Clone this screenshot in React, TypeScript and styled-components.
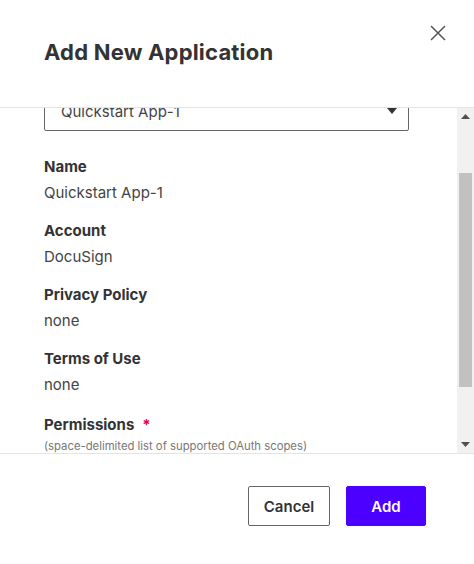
import React, { useEffect, useRef } from 'react';
import styled, { createGlobalStyle } from 'styled-components';

const GlobalStyle = createGlobalStyle`
  html, body {
    margin: 0;
    padding: 0;
    background: #ffffff;
  }
  body {
    font-family: Inter, "Noto Sans", "Liberation Sans", sans-serif;
    color: #333333;
  }
`;

const Modal = styled.div`
  width: 474px;
  height: 564px;
  display: flex;
  flex-direction: column;
  background: #fff;
`;

const Header = styled.header`
  flex: none;
  height: 108px;
  box-sizing: border-box;
  display: flex;
  align-items: flex-start;
  justify-content: space-between;
  padding: 25px 28px 0 44px;
  border-bottom: 1px solid #e4e4e4;
`;

const Title = styled.h2`
  margin: 13px 0 0;
  font-size: 22px;
  line-height: 28px;
  font-weight: 700;
  color: #333;
  letter-spacing: 0.2px;
`;

const CloseButton = styled.button`
  width: 16px;
  height: 16px;
  padding: 0;
  border: 0;
  background: none;
  cursor: pointer;
  display: flex;
`;

const Body = styled.div`
  flex: 1;
  min-height: 0;
  display: flex;
`;

// the scrolled list of fields
const ScrollArea = styled.div`
  flex: 1;
  overflow: hidden;
  padding: 24px 48px 21px 44px;
`;

// classic windows-like scrollbar drawn next to the list
const ScrollBar = styled.div`
  flex: none;
  width: 17px;
  background: #f1f1f1;
  display: flex;
  flex-direction: column;
`;

const ScrollArrow = styled.div`
  height: 17px;
  display: flex;
  align-items: center;
  justify-content: center;
`;

const ThumbGap = styled.div<{ $size?: number }>`
  flex: ${(p) => (p.$size ? `0 0 ${p.$size}px` : '1')};
`;

const Thumb = styled.div`
  height: 214px;
  margin: 0 2px;
  background: #c1c1c1;
`;

const Fields = styled.div`
  display: flex;
  flex-direction: column;
  gap: 16px;
`;

const Field = styled.div<{ $extraTop?: number; $extraBottom?: number }>`
  display: flex;
  flex-direction: column;
  gap: 4px;
  margin-top: ${(p) => p.$extraTop || 0}px;
  margin-bottom: ${(p) => p.$extraBottom || 0}px;
`;

const Label = styled.div`
  font-size: 15px;
  line-height: 22px;
  font-weight: 700;
  color: #333;
`;

const Required = styled.span`
  color: #e5004c;
  margin-left: 8px;
`;

const Value = styled.div`
  font-size: 15px;
  line-height: 22px;
  color: #444;
`;

const Hint = styled.div`
  font-size: 11.3px;
  line-height: 15px;
  color: #777;
  margin-top: -1px;
`;

const Select = styled.div`
  height: 40px;
  box-sizing: border-box;
  border: 1px solid #666;
  border-radius: 2px;
  padding: 0 11px 0 16px;
  display: flex;
  align-items: center;
  justify-content: space-between;
  font-size: 15px;
  color: #444;
`;

const TextArea = styled.textarea`
  margin-top: 4px;
  height: 48px;
  box-sizing: border-box;
  border: 1px solid #666;
  border-radius: 2px;
  resize: none;
  font: inherit;
  font-size: 15px;
  padding: 8px 16px;
`;

const Footer = styled.footer`
  flex: none;
  height: 111px;
  box-sizing: border-box;
  border-top: 1px solid #e4e4e4;
  display: flex;
  justify-content: flex-end;
  align-items: flex-start;
  gap: 16px;
  padding: 32px 48px 0 0;
`;

const Button = styled.button<{ $primary?: boolean }>`
  height: 40px;
  width: ${(p) => (p.$primary ? 80 : 82)}px;
  padding: 0;
  box-sizing: border-box;
  border-radius: 2px;
  font-family: inherit;
  font-size: 15px;
  font-weight: 600;
  cursor: pointer;
  border: 1px solid ${(p) => (p.$primary ? '#4c00ff' : '#666')};
  background: ${(p) => (p.$primary ? '#4c00ff' : '#fff')};
  color: ${(p) => (p.$primary ? '#fff' : '#333')};
`;

const details = [
  { label: 'Name', value: 'Quickstart App-1' },
  { label: 'Account', value: 'DocuSign' },
  { label: 'Privacy Policy', value: 'none' },
  { label: 'Terms of Use', value: 'none' },
];

const App = () => {
  const listRef = useRef<HTMLDivElement>(null);

  useEffect(() => {
    // the screenshot shows the list already scrolled a bit
    if (listRef.current) listRef.current.scrollTop = 41;
  }, []);

  return (
    <>
      <GlobalStyle />
      <Modal>
        <Header>
          <Title>Add New Application</Title>
          <CloseButton aria-label="Close">
            <svg width="16" height="16" viewBox="0 0 16 16">
              <path d="M1 1l14 14M15 1L1 15" stroke="#555" strokeWidth="1.5" fill="none" />
            </svg>
          </CloseButton>
        </Header>

        <Body>
          <ScrollArea ref={listRef}>
            <Fields>
              <Field $extraBottom={9}>
                <Select>
                  <span>Quickstart App-1</span>
                  <svg width="10" height="6" viewBox="0 0 10 6">
                    <path d="M0 0h10L5 6z" fill="#333" />
                  </svg>
                </Select>
              </Field>
              {details.map((d) => (
                <Field key={d.label}>
                  <Label>{d.label}</Label>
                  <Value>{d.value}</Value>
                </Field>
              ))}
              <Field $extraTop={2}>
                <Label>
                  Permissions<Required>*</Required>
                </Label>
                <Hint>(space-delimited list of supported OAuth scopes)</Hint>
                <TextArea defaultValue="signature" />
              </Field>
            </Fields>
          </ScrollArea>
          <ScrollBar>
            <ScrollArrow>
              <svg width="9" height="5" viewBox="0 0 9 5">
                <path d="M0 5h9L4.5 0z" fill="#505050" />
              </svg>
            </ScrollArrow>
            <ThumbGap $size={48} />
            <Thumb />
            <ThumbGap />
            <ScrollArrow>
              <svg width="9" height="5" viewBox="0 0 9 5">
                <path d="M0 0h9L4.5 5z" fill="#505050" />
              </svg>
            </ScrollArrow>
          </ScrollBar>
        </Body>

        <Footer>
          <Button>Cancel</Button>
          <Button $primary>Add</Button>
        </Footer>
      </Modal>
    </>
  );
};

export default App;
